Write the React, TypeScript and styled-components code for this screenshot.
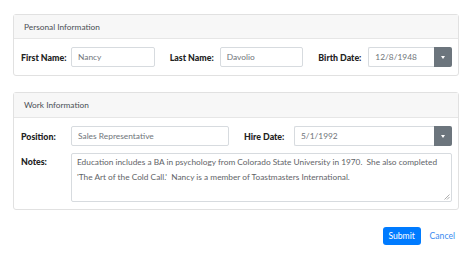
import React from "react";
import styled, { createGlobalStyle } from "styled-components";

const Global = createGlobalStyle`
  html, body { margin: 0; padding: 0; background: #fff; }
  body { font-family: Lato, "Noto Sans", sans-serif; color: #212529; }
  * { box-sizing: border-box; }
`;

const Page = styled.div`
  width: 474px;
  padding: 14px 15px 0 13px;
  display: flex;
  flex-direction: column;
`;

const Card = styled.section<{ $mb: number }>`
  border: 1px solid #e1e1e1;
  border-radius: 3px;
  margin-bottom: ${(p) => p.$mb}px;
  background: #fff;
`;

const CardHeader = styled.div<{ $h: number }>`
  height: ${(p) => p.$h}px;
  background: #f7f7f7;
  border-bottom: 1px solid #e6e6e6;
  padding-left: 10px;
  display: flex;
  align-items: center;
  font-size: 8.3px;
  color: #4b4f54;
`;

const CardBody = styled.div<{ $pt: number; $pb: number }>`
  padding: ${(p) => p.$pt}px 6px ${(p) => p.$pb}px 7px;
  display: flex;
  flex-direction: column;
  gap: 7px;
`;

const Grid = styled.div<{ $cols: number }>`
  display: grid;
  grid-template-columns: repeat(${(p) => p.$cols}, 1fr);
  column-gap: 15px;
`;

const Field = styled.div<{ $top?: boolean }>`
  display: flex;
  align-items: ${(p) => (p.$top ? "flex-start" : "center")};
`;

const Label = styled.label<{ $top?: boolean }>`
  width: 50px;
  flex: none;
  font-size: 8.8px;
  font-weight: 900;
  color: #222;
  padding-top: ${(p) => (p.$top ? "3px" : "0")};
  white-space: nowrap;
`;

const Input = styled.div`
  flex: 1;
  height: 20px;
  border: 1px solid #d7dbdf;
  border-radius: 2px;
  padding-left: 6px;
  display: flex;
  align-items: center;
  font-size: 8.4px;
  color: #70757a;
`;

const DateWrap = styled.div`
  flex: 1;
  display: flex;
  height: 20px;
`;

const DateInput = styled(Input)`
  border-radius: 2px 0 0 2px;
  border-right: none;
`;

const DropButton = styled.div`
  width: 18px;
  height: 20px;
  background: #6c757d;
  border-radius: 0 2px 2px 0;
  display: flex;
  align-items: center;
  justify-content: center;
`;

const Caret = styled.span`
  width: 0;
  height: 0;
  border-left: 2.5px solid transparent;
  border-right: 2.5px solid transparent;
  border-top: 3px solid #fff;
`;

const TextArea = styled.div`
  flex: 1;
  height: 49px;
  border: 1px solid #d7dbdf;
  border-radius: 2px;
  padding: 1px 5px;
  font-size: 8.3px;
  line-height: 15px;
  color: #5f6468;
  position: relative;
`;

const Grip = styled.svg`
  position: absolute;
  right: 1px;
  bottom: 1px;
`;

const Actions = styled.div`
  display: flex;
  justify-content: flex-end;
  align-items: center;
  gap: 9px;
  padding-right: 4px;
`;

const Submit = styled.button`
  width: 38px;
  height: 18px;
  border: none;
  border-radius: 3px;
  background: #007bff;
  color: #fff;
  font-family: inherit;
  font-size: 8.6px;
  padding: 0;
`;

const Cancel = styled.a`
  font-size: 8.6px;
  color: #3b8cf0;
`;

function DateField({ value }: { value: string }) {
  return (
    <DateWrap>
      <DateInput>{value}</DateInput>
      <DropButton>
        <Caret />
      </DropButton>
    </DateWrap>
  );
}

export default function App() {
  return (
    <>
      <Global />
      <Page>
        <Card $mb={16}>
          <CardHeader $h={24}>Personal Information</CardHeader>
          <CardBody $pt={8} $pb={8}>
            <Grid $cols={3}>
              <Field>
                <Label>First Name:</Label>
                <Input>Nancy</Input>
              </Field>
              <Field>
                <Label>Last Name:</Label>
                <Input>Davolio</Input>
              </Field>
              <Field>
                <Label>Birth Date:</Label>
                <DateField value="12/8/1948" />
              </Field>
            </Grid>
          </CardBody>
        </Card>
        <Card $mb={17}>
          <CardHeader $h={25}>Work Information</CardHeader>
          <CardBody $pt={8} $pb={7}>
            <Grid $cols={2}>
              <Field>
                <Label>Position:</Label>
                <Input>Sales Representative</Input>
              </Field>
              <Field>
                <Label>Hire Date:</Label>
                <DateField value="5/1/1992" />
              </Field>
            </Grid>
            <Field $top>
              <Label $top>Notes:</Label>
              <TextArea>
                Education includes a BA in psychology from Colorado State University in 1970.&nbsp; She also completed
                'The Art of the Cold Call.'&nbsp; Nancy is a member of Toastmasters International.
                <Grip width="6" height="6" viewBox="0 0 6 6">
                  <path d="M5.5 0.5 L0.5 5.5 M5.5 3 L3 5.5" stroke="#999" strokeWidth="0.8" />
                </Grip>
              </TextArea>
            </Field>
          </CardBody>
        </Card>
        <Actions>
          <Submit>Submit</Submit>
          <Cancel>Cancel</Cancel>
        </Actions>
      </Page>
    </>
  );
}
